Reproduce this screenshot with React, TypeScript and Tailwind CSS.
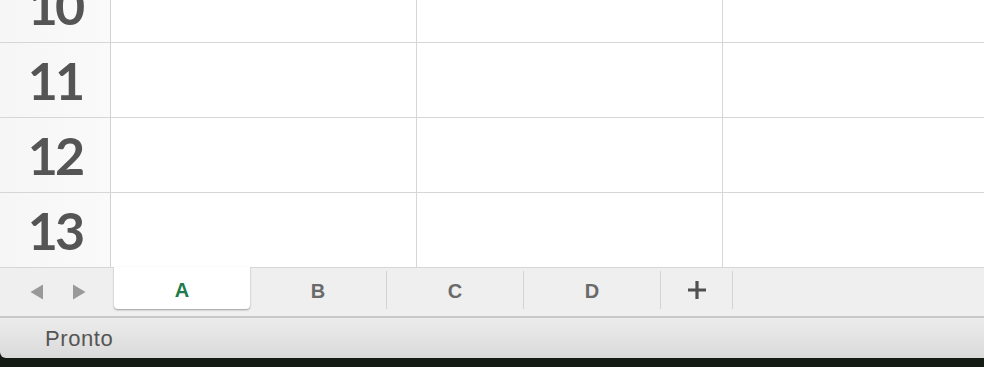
const rows = [10, 11, 12, 13];
const tabs = ['A', 'B', 'C', 'D'];

function Row({ n }: { n: number }) {
  return (
    <div className="flex h-[75px] shrink-0 border-b border-[#d6d6d6]">
      <div className="flex w-[111px] shrink-0 items-center justify-center border-r border-[#d2d2d2] bg-gradient-to-r from-[#f6f6f6] to-[#fafafa]">
        <span className="font-['Lato',sans-serif] text-[52px] font-bold leading-none tracking-[-3px] text-[#555555]">
          {n}
        </span>
      </div>
      <div className="w-[306px] shrink-0 border-r border-[#d6d6d6] bg-white" />
      <div className="w-[306px] shrink-0 border-r border-[#d6d6d6] bg-white" />
      <div className="flex-1 bg-white" />
    </div>
  );
}

export default function App() {
  return (
    <div className="flex h-[367px] w-[984px] flex-col overflow-hidden bg-[#141a14] font-['Liberation_Sans',Arial,sans-serif]">
      {/* Grid */}
      <div className="flex h-[268px] shrink-0 flex-col justify-end overflow-hidden bg-white">
        {rows.map((n) => (
          <Row key={n} n={n} />
        ))}
      </div>

      {/* Sheet tabs */}
      <div className="flex h-[48px] shrink-0 items-start bg-[#efefef]">
        <div className="flex h-full w-[114px] shrink-0 items-center justify-center gap-[28px] pl-[2px]">
          <svg width="14" height="16" viewBox="0 0 14 16">
            <path d="M13 0.5 L0.5 8 L13 15.5 Z" fill="#999999" />
          </svg>
          <svg width="14" height="16" viewBox="0 0 14 16">
            <path d="M1 0.5 L13.5 8 L1 15.5 Z" fill="#999999" />
          </svg>
        </div>
        <div className="-mt-px flex h-[42px] w-[136px] shrink-0 items-center justify-center rounded-b-[4px] bg-white pt-[4px] shadow-[0_1px_2px_rgba(0,0,0,0.35)]">
          <span className="text-[20px] font-bold text-[#1f7a4c]">A</span>
        </div>
        {tabs.slice(1).map((t) => (
          <div
            key={t}
            className="mt-[3px] flex h-[38px] w-[137px] shrink-0 items-center justify-center border-r border-[#d3d3d3] pt-[2px]"
          >
            <span className="text-[20px] font-bold text-[#6a6a6a]">{t}</span>
          </div>
        ))}
        <div className="mt-[3px] flex h-[38px] w-[72px] shrink-0 items-center justify-center border-r border-[#d3d3d3]">
          <svg width="20" height="20" viewBox="0 0 20 20">
            <path d="M10 1 V19 M1 10 H19" stroke="#505050" strokeWidth="3.2" />
          </svg>
        </div>
      </div>

      {/* Status bar */}
      <div className="flex h-[42px] shrink-0 items-center rounded-bl-[6px] border-t-2 border-[#c8c8c8] bg-gradient-to-b from-[#ececec] to-[#dadada] pl-[45px]">
        <span className="text-[22px] tracking-[0.6px] text-[#555555]">Pronto</span>
      </div>
    </div>
  );
}
